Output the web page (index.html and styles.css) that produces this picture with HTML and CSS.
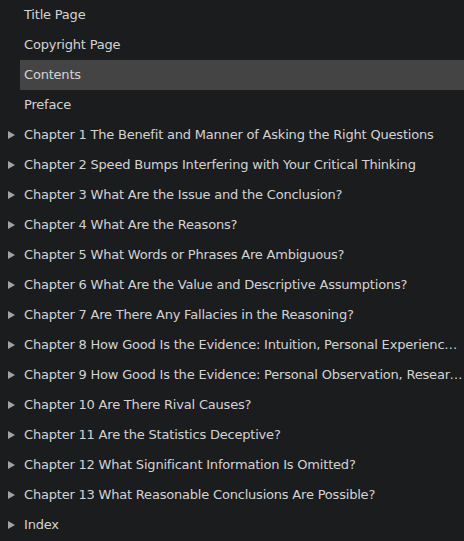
FILE: index.html
```html
<!DOCTYPE html>
<html lang="en">
<head>
    <meta charset="UTF-8">
    <title>Contents</title>
    <link rel="stylesheet" href="styles.css">
</head>
<body>
    <ul class="toc">
        <li class="toc-item"><span class="toc-toggle"></span><span class="toc-label">Title Page</span></li>
        <li class="toc-item"><span class="toc-toggle"></span><span class="toc-label">Copyright Page</span></li>
        <li class="toc-item is-selected"><span class="toc-toggle"></span><span class="toc-label">Contents</span></li>
        <li class="toc-item"><span class="toc-toggle"></span><span class="toc-label">Preface</span></li>
        <li class="toc-item has-children"><span class="toc-toggle"></span><span class="toc-label">Chapter 1 The Benefit and Manner of Asking the Right Questions</span></li>
        <li class="toc-item has-children"><span class="toc-toggle"></span><span class="toc-label">Chapter 2 Speed Bumps Interfering with Your Critical Thinking</span></li>
        <li class="toc-item has-children"><span class="toc-toggle"></span><span class="toc-label">Chapter 3 What Are the Issue and the Conclusion?</span></li>
        <li class="toc-item has-children"><span class="toc-toggle"></span><span class="toc-label">Chapter 4 What Are the Reasons?</span></li>
        <li class="toc-item has-children"><span class="toc-toggle"></span><span class="toc-label">Chapter 5 What Words or Phrases Are Ambiguous?</span></li>
        <li class="toc-item has-children"><span class="toc-toggle"></span><span class="toc-label">Chapter 6 What Are the Value and Descriptive Assumptions?</span></li>
        <li class="toc-item has-children"><span class="toc-toggle"></span><span class="toc-label">Chapter 7 Are There Any Fallacies in the Reasoning?</span></li>
        <li class="toc-item has-children"><span class="toc-toggle"></span><span class="toc-label">Chapter 8 How Good Is the Evidence: Intuition, Personal Experience, and Authority?</span></li>
        <li class="toc-item has-children"><span class="toc-toggle"></span><span class="toc-label">Chapter 9 How Good Is the Evidence: Personal Observation, Research Studies, Case Examples, and Analogies?</span></li>
        <li class="toc-item has-children"><span class="toc-toggle"></span><span class="toc-label">Chapter 10 Are There Rival Causes?</span></li>
        <li class="toc-item has-children"><span class="toc-toggle"></span><span class="toc-label">Chapter 11 Are the Statistics Deceptive?</span></li>
        <li class="toc-item has-children"><span class="toc-toggle"></span><span class="toc-label">Chapter 12 What Significant Information Is Omitted?</span></li>
        <li class="toc-item has-children"><span class="toc-toggle"></span><span class="toc-label">Chapter 13 What Reasonable Conclusions Are Possible?</span></li>
        <li class="toc-item has-children"><span class="toc-toggle"></span><span class="toc-label">Index</span></li>
    </ul>
</body>
</html>
```

FILE: styles.css
```css
* {
    margin: 0;
    padding: 0;
    box-sizing: border-box;
}

body {
    font-family: "DejaVu Sans", sans-serif;
    font-size: 13px;
    letter-spacing: -0.2px;
    width: 464px;
    height: 541px;
    background: #1b1c1e;
    color: #d4d4d4;
    overflow: hidden;
}

.toc {
    list-style: none;
}

.toc-item {
    display: flex;
    align-items: center;
    height: 30px;
}

.toc-toggle {
    width: 20px;
    flex-shrink: 0;
    display: flex;
    align-items: center;
    padding-left: 8px;
}

/* disclosure triangle for collapsed chapters */
.has-children .toc-toggle::before {
    content: "";
    width: 0;
    height: 0;
    border-top: 4.5px solid transparent;
    border-bottom: 4.5px solid transparent;
    border-left: 7px solid #a3a3a3;
}

.toc-label {
    flex: 1;
    min-width: 0;
    height: 100%;
    padding: 0 1px 0 4px;
    line-height: 30px;
    white-space: nowrap;
    overflow: hidden;
    text-overflow: ellipsis;
}

.is-selected .toc-label {
    background: #444444;
}
```
